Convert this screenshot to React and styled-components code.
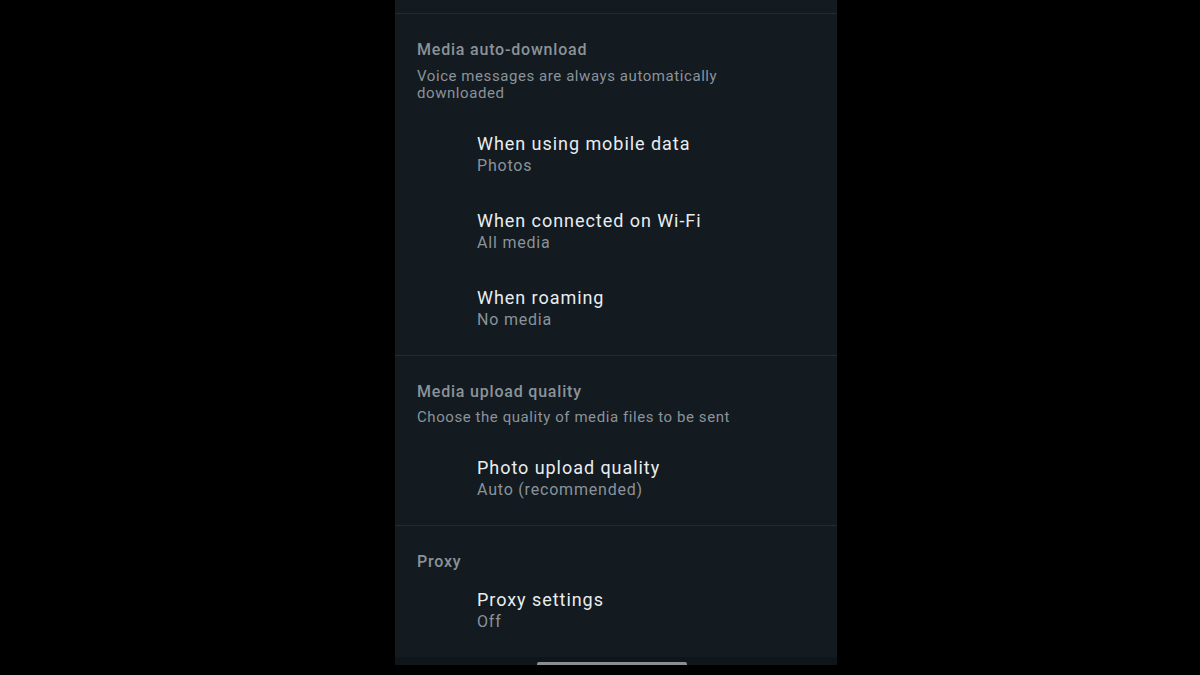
import React from 'react';
import styled, { createGlobalStyle } from 'styled-components';

const GlobalStyle = createGlobalStyle`
  html, body {
    margin: 0;
    padding: 0;
    background: #000;
  }
  body {
    font-family: Roboto, 'Noto Sans', sans-serif;
    -webkit-font-smoothing: antialiased;
  }
`;

const Stage = styled.div`
  width: 1200px;
  height: 675px;
  background: #000;
  display: flex;
  padding-left: 395px;
  box-sizing: border-box;
  overflow: hidden;
`;

const Phone = styled.div`
  width: 442px;
  display: flex;
  flex-direction: column;
`;

const Screen = styled.div`
  background: #131a20;
  height: 657px;
  display: flex;
  flex-direction: column;
`;

const TopSpace = styled.div`
  height: 13px;
  flex-shrink: 0;
`;

const Section = styled.section`
  border-top: 1px solid #222b31;
  padding: 26px 0 7.5px;
`;

const SectionHead = styled.h2`
  margin: 0;
  padding: 0 22px;
  font-size: 16px;
  line-height: 19px;
  font-weight: 500;
  letter-spacing: 0.8px;
  color: #8a939a;
`;

const SectionNote = styled.p`
  margin: 8.5px 0 14.5px;
  padding: 0 22px;
  max-width: 320px;
  font-size: 15px;
  line-height: 17px;
  letter-spacing: 0.57px;
  color: #8a939a;
`;

const Rows = styled.div`
  margin-top: 1.5px;
  display: flex;
  flex-direction: column;
`;

const Row = styled.div`
  height: 77px;
  box-sizing: border-box;
  padding: 16.5px 22px 16.5px 82px;
  display: flex;
  flex-direction: column;
`;

const RowTitle = styled.div`
  font-size: 18px;
  line-height: 22px;
  letter-spacing: 0.95px;
  color: #e9edef;
`;

const RowValue = styled.div`
  font-size: 16px;
  line-height: 22px;
  letter-spacing: 0.8px;
  color: #8a939a;
`;

const NavBand = styled.div`
  height: 8px;
  background: #0f1519;
  display: flex;
  align-items: flex-end;
  justify-content: center;
  padding-right: 8px;
`;

const HomeBar = styled.div`
  width: 150px;
  height: 3px;
  border-radius: 2px 2px 0 0;
  background: #8b8f93;
`;

const sections = [
  {
    title: 'Media auto-download',
    note: 'Voice messages are always automatically downloaded',
    rows: [
      ['When using mobile data', 'Photos'],
      ['When connected on Wi-Fi', 'All media'],
      ['When roaming', 'No media'],
    ],
  },
  {
    title: 'Media upload quality',
    note: 'Choose the quality of media files to be sent',
    rows: [['Photo upload quality', 'Auto (recommended)']],
  },
  {
    title: 'Proxy',
    rows: [['Proxy settings', 'Off']],
  },
];

export default function App() {
  return (
    <>
      <GlobalStyle />
      <Stage>
        <Phone>
          <Screen>
            <TopSpace />
            {sections.map((s) => (
              <Section key={s.title}>
                <SectionHead>{s.title}</SectionHead>
                {s.note && <SectionNote>{s.note}</SectionNote>}
                <Rows>
                  {s.rows.map(([title, value]) => (
                    <Row key={title}>
                      <RowTitle>{title}</RowTitle>
                      <RowValue>{value}</RowValue>
                    </Row>
                  ))}
                </Rows>
              </Section>
            ))}
          </Screen>
          <NavBand>
            <HomeBar />
          </NavBand>
        </Phone>
      </Stage>
    </>
  );
}
